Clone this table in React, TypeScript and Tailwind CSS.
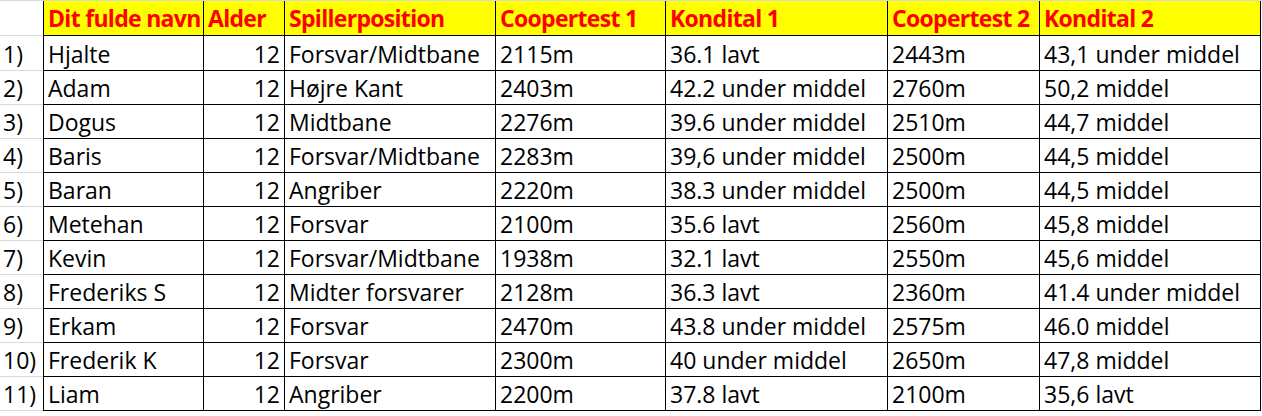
import React from "react";

type Row = {
    nr: string;
    navn: string;
    alder: string;
    position: string;
    cooper1: string;
    kondital1: string;
    cooper2: string;
    kondital2: string;
};

const rows: Row[] = [
    { nr: "1)", navn: "Hjalte", alder: "12", position: "Forsvar/Midtbane", cooper1: "2115m", kondital1: "36.1 lavt", cooper2: "2443m", kondital2: "43,1 under middel" },
    { nr: "2)", navn: "Adam", alder: "12", position: "Højre Kant", cooper1: "2403m", kondital1: "42.2 under middel", cooper2: "2760m", kondital2: "50,2 middel" },
    { nr: "3)", navn: "Dogus", alder: "12", position: "Midtbane", cooper1: "2276m", kondital1: "39.6 under middel", cooper2: "2510m", kondital2: "44,7 middel" },
    { nr: "4)", navn: "Baris", alder: "12", position: "Forsvar/Midtbane", cooper1: "2283m", kondital1: "39,6 under middel", cooper2: "2500m", kondital2: "44,5 middel" },
    { nr: "5)", navn: "Baran", alder: "12", position: "Angriber", cooper1: "2220m", kondital1: "38.3 under middel", cooper2: "2500m", kondital2: "44,5 middel" },
    { nr: "6)", navn: "Metehan", alder: "12", position: "Forsvar", cooper1: "2100m", kondital1: "35.6 lavt", cooper2: "2560m", kondital2: "45,8 middel" },
    { nr: "7)", navn: "Kevin", alder: "12", position: "Forsvar/Midtbane", cooper1: "1938m", kondital1: "32.1 lavt", cooper2: "2550m", kondital2: "45,6 middel" },
    { nr: "8)", navn: "Frederiks S", alder: "12", position: "Midter forsvarer", cooper1: "2128m", kondital1: "36.3 lavt", cooper2: "2360m", kondital2: "41.4 under middel" },
    { nr: "9)", navn: "Erkam", alder: "12", position: "Forsvar", cooper1: "2470m", kondital1: "43.8 under middel", cooper2: "2575m", kondital2: "46.0 middel" },
    { nr: "10)", navn: "Frederik K", alder: "12", position: "Forsvar", cooper1: "2300m", kondital1: "40 under middel", cooper2: "2650m", kondital2: "47,8 middel" },
    { nr: "11)", navn: "Liam", alder: "12", position: "Angriber", cooper1: "2200m", kondital1: "37.8 lavt", cooper2: "2100m", kondital2: "35,6 lavt" },
];

const headers = ["Dit fulde navn", "Alder", "Spillerposition", "Coopertest 1", "Kondital 1", "Coopertest 2", "Kondital 2"];

// column widths incl. the right border (first data column also holds the left border)
const colClass = [
    "w-[161px] border-l border-r",
    "w-[81px] border-r",
    "w-[211px] border-r",
    "w-[170px] border-r",
    "w-[222px] border-r",
    "w-[152px] border-r",
    "w-[221px] border-r",
];

const App: React.FC = () => {
    return (
        <div className="w-[1262px] h-[416px] bg-white overflow-hidden font-['Open_Sans',sans-serif] text-black">
            {/* header row */}
            <div className="flex h-[36px] border-t border-[#d9d9d9]">
                <div className="w-[43px] border-b border-[#d9d9d9]" />
                {headers.map((h, i) => (
                    <div
                        key={h}
                        className={`${colClass[i]} flex items-center border-b border-black bg-[#ffff00] pl-[4px] pt-[1px] text-[23px] font-bold tracking-[-0.7px] text-[#ff0000] whitespace-nowrap overflow-hidden`}
                    >
                        {h}
                    </div>
                ))}
            </div>

            {rows.map((r, idx) => (
                <div key={r.nr} className={`flex ${idx === 0 ? "h-[35px]" : "h-[34px]"} text-[23px] whitespace-nowrap`}>
                    <div className="w-[43px] flex items-center pl-[3px] pt-[2px] border-b border-[#d9d9d9]">{r.nr}</div>
                    <div className={`${colClass[0]} flex items-center pl-[4px] pt-[2px] border-b border-black overflow-hidden`}>{r.navn}</div>
                    <div className={`${colClass[1]} flex items-center justify-end pr-[4px] pt-[2px] border-b border-black overflow-hidden`}>{r.alder}</div>
                    <div className={`${colClass[2]} flex items-center pl-[4px] pt-[2px] border-b border-black overflow-hidden`}>{r.position}</div>
                    <div className={`${colClass[3]} flex items-center pl-[4px] pt-[2px] border-b border-black overflow-hidden`}>{r.cooper1}</div>
                    <div className={`${colClass[4]} flex items-center pl-[4px] pt-[2px] border-b border-black overflow-hidden`}>{r.kondital1}</div>
                    <div className={`${colClass[5]} flex items-center pl-[4px] pt-[2px] border-b border-black overflow-hidden`}>{r.cooper2}</div>
                    <div className={`${colClass[6]} flex items-center pl-[4px] pt-[2px] border-b border-black overflow-hidden`}>{r.kondital2}</div>
                </div>
            ))}
        </div>
    );
};

export default App;
